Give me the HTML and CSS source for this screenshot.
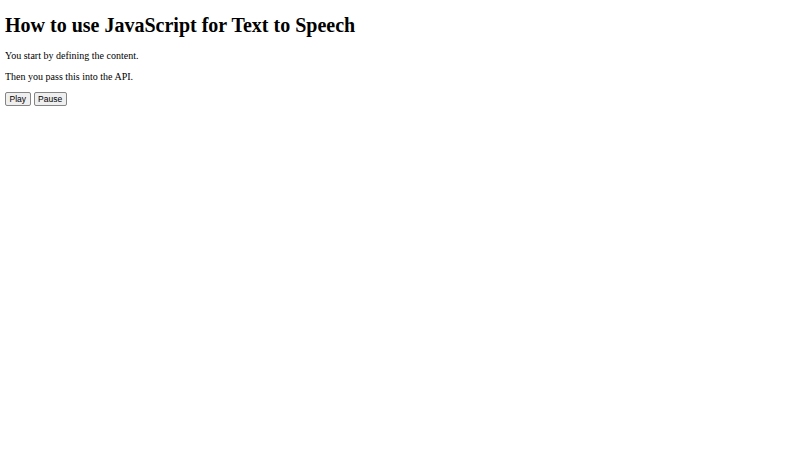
FILE: index.html
```html
<!DOCTYPE html>
<html lang="en">
<head>
<meta charset="utf-8">
<title>Text to Speech</title>
<link rel="stylesheet" href="styles.css">
</head>
<body class="page">
  <h1 class="title">How to use JavaScript for Text to Speech</h1>
  <p class="copy">You start by defining the content.</p>
  <p class="copy">Then you pass this into the API.</p>
  <div class="controls">
    <button class="btn" type="button">Play</button>
    <button class="btn" type="button">Pause</button>
  </div>
</body>
</html>
```

FILE: styles.css
```css
html {
  background: #fff;
}

.page {
  margin: 0 5px 5px;
  padding-top: 3px;
  font-family: "Liberation Serif", "Times New Roman", serif;
  color: #000;
}

.title {
  font-size: 20px;
  font-weight: bold;
  margin: 11px 0 13.4px;
}

.copy {
  font-size: 10px;
  margin: 10px 0;
}

.controls {
  display: flex;
  gap: 3px;
}

.btn {
  font-family: "Liberation Sans", Arial, sans-serif;
  font-size: 8.5px;
  padding: 1px 3.5px;
  background: #efefef;
  color: #000;
  border: 1px solid #858585;
  border-radius: 2px;
  line-height: normal;
}
```
